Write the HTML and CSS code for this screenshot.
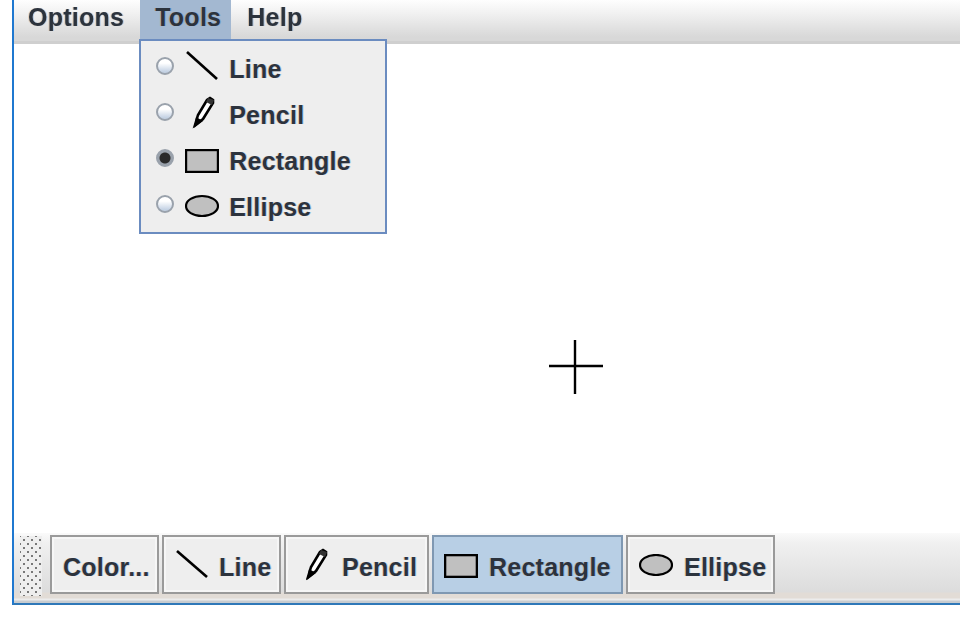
FILE: index.html
```html
<!DOCTYPE html>
<html lang="en">
<head>
<meta charset="utf-8">
<title>Paint</title>
<link rel="stylesheet" href="styles.css">
</head>
<body>
<div class="window">
  <nav class="menubar">
    <div class="menu menu-first">Options</div>
    <div class="menu menu-open">Tools
      <div class="popup">
        <div class="popup-item">
          <span class="radio"></span>
          <span class="icon-slot"><svg class="icon" width="34" height="30" viewBox="0 0 34 30"><path d="M2 1L32 28" stroke="#000" stroke-width="2.6" fill="none"/></svg></span>
          <span class="label">Line</span>
        </div>
        <div class="popup-item">
          <span class="radio"></span>
          <span class="icon-slot"><svg class="icon icon-pencil" width="34" height="34" viewBox="0 0 34 34"><path d="M10 30L13 20L22 5L25 3L28 5L28 8L18 24Z" fill="#fff" stroke="#000" stroke-width="2.6"/><path d="M9 33L11 22L18 26Z" fill="#000"/><path d="M23 3L29 5L27 10L21 7Z" fill="#333"/></svg></span>
          <span class="label">Pencil</span>
        </div>
        <div class="popup-item">
          <span class="radio radio-on"></span>
          <span class="icon-slot"><svg class="icon icon-rect" width="34" height="24" viewBox="0 0 34 24"><rect x="1" y="1" width="32" height="22" fill="#c0c0c0" stroke="#000" stroke-width="2.4"/></svg></span>
          <span class="label">Rectangle</span>
        </div>
        <div class="popup-item">
          <span class="radio"></span>
          <span class="icon-slot"><svg class="icon icon-ellipse" width="34" height="24" viewBox="0 0 34 24"><ellipse cx="17" cy="12" rx="16" ry="10" fill="#c0c0c0" stroke="#000" stroke-width="2.2"/></svg></span>
          <span class="label">Ellipse</span>
        </div>
      </div>
    </div>
    <div class="menu">Help</div>
  </nav>
  <main class="canvas">
    <svg class="cursor" width="54" height="54" viewBox="0 0 54 54"><path d="M0 26H54M26 0V54" stroke="#000" stroke-width="2.4" fill="none"/></svg>
  </main>
  <div class="toolbar">
    <div class="grip"></div>
    <button class="tool tool-color"><span class="label">Color...</span></button>
    <button class="tool tool-line"><svg class="icon icon-tline" width="32" height="28" viewBox="0 0 32 28"><path d="M1 1L31 27" stroke="#000" stroke-width="2.6" fill="none"/></svg><span class="label">Line</span></button>
    <button class="tool tool-pencil"><svg class="icon icon-tpencil" width="22" height="34" viewBox="8 0 22 34"><path d="M10 30L13 20L22 5L25 3L28 5L28 8L18 24Z" fill="#fff" stroke="#000" stroke-width="2.6"/><path d="M9 33L11 22L18 26Z" fill="#000"/><path d="M23 3L29 5L27 10L21 7Z" fill="#333"/></svg><span class="label">Pencil</span></button>
    <button class="tool tool-rect tool-active"><svg class="icon icon-trect" width="34" height="24" viewBox="0 0 34 24"><rect x="1" y="1" width="32" height="22" fill="#c0c0c0" stroke="#000" stroke-width="2.6"/></svg><span class="label">Rectangle</span></button>
    <button class="tool tool-ellipse"><svg class="icon" width="34" height="22" viewBox="0 0 34 22"><ellipse cx="17" cy="11" rx="16" ry="10" fill="#c0c0c0" stroke="#000" stroke-width="2.2"/></svg><span class="label">Ellipse</span></button>
  </div>
</div>
</body>
</html>
```
FILE: styles.css
```css
html, body {
  margin: 0;
  padding: 0;
  background: #fff;
  overflow: hidden;
}
body {
  width: 960px;
  height: 624px;
  font-family: "Liberation Sans", Arial, sans-serif;
  font-weight: 700;
  font-size: 25px;
  letter-spacing: 0.25px;
  color: #2c333d;
  text-shadow: -1px 0 rgba(205, 145, 80, 0.3), 1px 0 rgba(60, 130, 210, 0.3);
}
.window {
  box-sizing: border-box;
  margin-left: 12px;
  width: 960px;
  height: 605px;
  border-left: 2px solid #1f78d0;
  border-bottom: 2px solid #2f78b8;
  display: flex;
  flex-direction: column;
  filter: blur(0.45px);
}
.menubar {
  box-sizing: border-box;
  height: 44px;
  flex: none;
  display: flex;
  padding-left: 1px;
  background: linear-gradient(#fefefe 0, #f2f2f2 30%, #d8d8d8 90%, #d8d8d8 100%);
  border-bottom: 3px solid #cfcfcf;
}
.menu {
  position: relative;
  padding: 0 14px 0 16px;
  height: 39px;
  line-height: 34px;
}
.menu-first {
  padding: 0 14px 0 13px;
}
.menu-open {
  background: #a3b8d1;
  padding: 0 10px 0 15px;
  margin-left: 2px;
}
.popup {
  position: absolute;
  z-index: 2;
  left: -1px;
  top: 39px;
  box-sizing: border-box;
  width: 248px;
  height: 195px;
  padding: 2px 0 0;
  line-height: normal;
  background: #eee;
  border: 2px solid #6b8cc0;
}
.popup-item {
  height: 46px;
  display: flex;
  align-items: center;
  padding-left: 15px;
}
.label {
  margin-top: 6px;
}
.radio {
  box-sizing: border-box;
  flex: none;
  width: 18px;
  height: 18px;
  margin-right: 11px;
  border-radius: 50%;
  border: 2px solid #9aa2ac;
  background: linear-gradient(#fff 30%, #c4d2e4 90%);
}
.radio-on {
  background: radial-gradient(circle, #2a2a2a 0 5px, #9aa2ac 6px);
}
.icon-slot {
  flex: none;
  width: 34px;
  margin-right: 10px;
  display: flex;
  justify-content: center;
}
.icon {
  display: block;
  flex: none;
}
.icon-pencil {
  margin-top: -1px;
}
.icon-rect {
  margin-top: 6px;
}
.icon-ellipse {
  margin-top: 4px;
}
.icon-tline {
  margin-top: -2px;
}
.icon-tpencil {
  margin-top: -2px;
}
.icon-trect {
  margin-top: 2px;
}
.canvas {
  flex: 1;
  position: relative;
  background: #fff;
}
.cursor {
  position: absolute;
  left: 535px;
  top: 296px;
}
.toolbar {
  box-sizing: border-box;
  height: 70px;
  flex: none;
  display: flex;
  align-items: flex-start;
  gap: 3px;
  padding: 0 0 0 6px;
  background: linear-gradient(#fafafa 0, #f0f0f0 10px, #dcdcdc 59px, #e2dcd6 60px, #e2dcd6 65px, #ececec 66px, #ececec 67px, #c8ccd0 68px, #c8ccd0 70px);
}
.grip {
  flex: none;
  width: 22px;
  height: 60px;
  margin: 3px 5px 0 0;
  background-color: #eee;
  background-image: radial-gradient(circle, #777 0 1px, transparent 1.5px), radial-gradient(circle, #777 0 1px, transparent 1.5px);
  background-size: 8px 8px;
  background-position: 0 0, 4px 4px;
}
.tool {
  box-sizing: border-box;
  height: 59px;
  margin-top: 2px;
  padding: 0;
  display: flex;
  align-items: center;
  font: inherit;
  letter-spacing: inherit;
  color: inherit;
  text-shadow: inherit;
  background: #eee;
  border: 2px solid #9a9a9a;
  box-shadow: inset 0 0 0 2px #f6f6f6;
  white-space: nowrap;
}
.tool-color { width: 109px; padding-left: 11px; }
.tool-line { width: 119px; padding-left: 12px; gap: 11px; }
.tool-pencil { width: 145px; padding-left: 20px; gap: 14px; }
.tool-rect { width: 191px; padding-left: 10px; gap: 11px; }
.tool-ellipse { width: 149px; padding-left: 11px; gap: 11px; }
.tool-active {
  background: #b8cfe5;
  border-color: #7f98b2;
  box-shadow: none;
}
```
